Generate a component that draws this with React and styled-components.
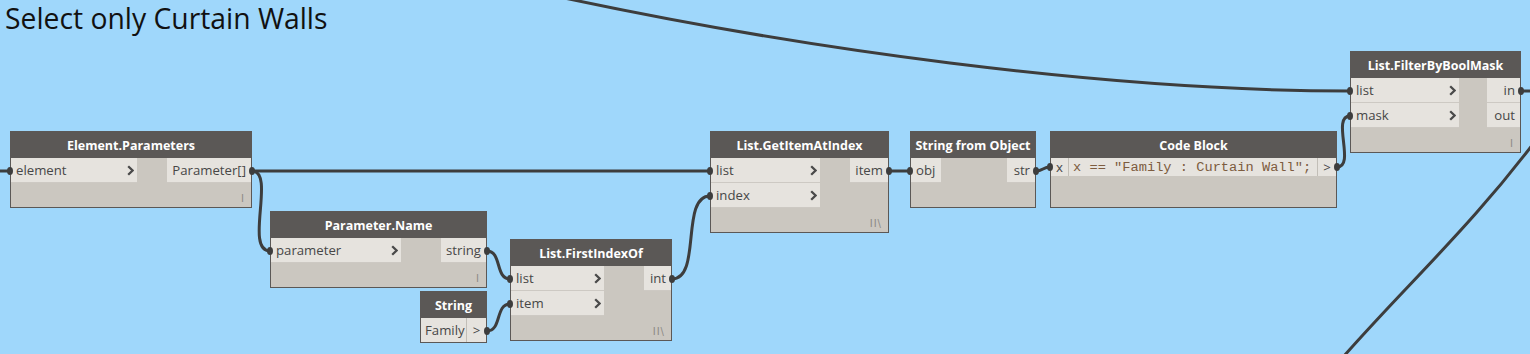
import React from 'react'
import styled, { createGlobalStyle } from 'styled-components'

const GlobalStyle = createGlobalStyle`
  html, body { margin: 0; padding: 0; background: #9fd7fb; overflow: hidden; }
  * { box-sizing: border-box; }
`

const nodes = [
  { title: 'Element.Parameters', x: 10, y: 131, w: 242, iw: 126, ow: 84, inputs: ['element'], outputs: ['Parameter[]'], lacing: 'I' },
  { title: 'Parameter.Name', x: 270, y: 211, w: 217, iw: 130, ow: 45, inputs: ['parameter'], outputs: ['string'], lacing: 'I' },
  { title: 'List.FirstIndexOf', x: 510, y: 239, w: 162, iw: 93, ow: 27, inputs: ['list', 'item'], outputs: ['int'], lacing: 'II\\' },
  { title: 'List.GetItemAtIndex', x: 710, y: 131, w: 179, iw: 109, ow: 38, inputs: ['list', 'index'], outputs: ['item'], lacing: 'II\\' },
  { title: 'String from Object', x: 910, y: 131, w: 126, iw: 30, ow: 28, inputs: ['obj'], outputs: ['str'], plain: true },
  { title: 'List.FilterByBoolMask', x: 1350, y: 51, w: 171, iw: 108, ow: 33, inputs: ['list', 'mask'], outputs: ['in', 'out'], lacing: 'I' },
]

const wires = [
  'M -10 171 L 10 171',
  'M 252 171 L 710 171',
  'M 252 171 C 276 171, 244 251, 270 251',
  'M 487 251 C 502 251, 495 279, 510 279',
  'M 487 331 C 502 331, 495 304, 510 304',
  'M 672 279 C 702 279, 680 196, 710 196',
  'M 889 171 L 910 171',
  'M 1036 171 C 1043 171, 1043 167, 1050 167',
  'M 1337 167 C 1356 167, 1331 116, 1350 116',
  'M 400 -40 C 800 60, 1150 91, 1350 91',
  'M 1521 91 L 1540 91',
  'M 1330 372 C 1400 290, 1470 230, 1545 128',
]

const ends = [
  [10, 171], [252, 171], [270, 251], [487, 251], [510, 279], [487, 331], [510, 304],
  [672, 279], [710, 171], [710, 196], [889, 171], [910, 171], [1036, 171], [1050, 167],
  [1337, 167], [1350, 116], [1350, 91], [1521, 91],
]

const Canvas = styled.div`
  position: relative;
  width: 1530px;
  height: 354px;
  overflow: hidden;
  background: #9fd7fb;
  font-family: "Open Sans", "Noto Sans", sans-serif;
`

const Title = styled.div`
  position: absolute;
  left: 5px;
  top: 0;
  font-size: 28.3px;
  line-height: 36px;
  color: #111;
`

const Wires = styled.svg`
  position: absolute;
  inset: 0;
  pointer-events: none;
  z-index: 2;
`

const Node = styled.div`
  position: absolute;
  left: ${p => p.$x}px;
  top: ${p => p.$y}px;
  width: ${p => p.$w}px;
  border: 1px solid #5b5856;
  background: #cbc7c0;
  display: flex;
  flex-direction: column;
`

const Header = styled.div`
  height: 26px;
  background: #5b5856;
  color: #fff;
  font-weight: 700;
  font-size: 12.5px;
  display: flex;
  align-items: center;
  justify-content: center;
  white-space: nowrap;
`

const Body = styled.div`
  display: flex;
  justify-content: space-between;
  align-items: flex-start;
`

const Column = styled.div`
  width: ${p => p.$w}px;
  display: flex;
  flex-direction: column;
`

const Port = styled.div`
  height: 25px;
  background: #e6e3de;
  border-bottom: 1px solid #cdc9c3;
  color: #474747;
  font-size: 13.2px;
  display: flex;
  align-items: center;
  justify-content: ${p => (p.$out ? 'flex-end' : 'space-between')};
  padding: ${p => (p.$out ? '0 5px 0 0' : '0 3px 0 5px')};
  white-space: nowrap;
`

const Footer = styled.div`
  height: 24px;
  display: flex;
  align-items: flex-end;
  justify-content: flex-end;
  padding: 0 6px 3px 0;
  color: #8d8a86;
  font-size: 10px;
  letter-spacing: 1px;
  font-family: "DejaVu Sans", sans-serif;
`

const InputRow = styled.div`
  height: 24px;
  display: flex;
  background: #e6e3de;
  font-size: 13.2px;
  color: #474747;
`

const Cell = styled.div`
  width: ${p => p.$w}px;
  flex: ${p => (p.$w ? 'none' : '1 1 0')};
  min-width: 0;
  overflow: hidden;
  display: flex;
  align-items: center;
  justify-content: ${p => (p.$center ? 'center' : 'flex-start')};
  padding: 0 ${p => (p.$center ? 0 : 4)}px;
  border-right: ${p => (p.$sep ? '1px solid #c2beb7' : 'none')};
  white-space: pre;
`

const Code = styled(Cell)`
  font-family: "Liberation Mono", "DejaVu Sans Mono", monospace;
  font-size: 13.7px;
  color: #7d5c3f;
`

const CodeRow = styled(InputRow)`
  height: 18px;
`

const Filler = styled.div`
  height: 31px;
`

const Chevron = () => (
  <svg width="7" height="11" viewBox="0 0 7 11">
    <path d="M1.2 1.2 L5.6 5.5 L1.2 9.8" fill="none" stroke="#4a4a4a" strokeWidth="2.3" />
  </svg>
)

const DynNode = ({ n }) => (
  <Node $x={n.x} $y={n.y} $w={n.w}>
    <Header>{n.title}</Header>
    <Body>
      <Column $w={n.iw}>
        {n.inputs.map(i => (
          <Port key={i}>
            {i}
            {!n.plain && <Chevron />}
          </Port>
        ))}
      </Column>
      <Column $w={n.ow}>
        {n.outputs.map(o => (
          <Port key={o} $out>{o}</Port>
        ))}
      </Column>
    </Body>
    <Footer>{n.lacing}</Footer>
  </Node>
)

const App = () => (
  <Canvas>
    <GlobalStyle />
    <Title>Select only Curtain Walls</Title>

    {nodes.map(n => <DynNode key={n.title} n={n} />)}

    <Node $x={420} $y={291} $w={67}>
      <Header>String</Header>
      <InputRow>
        <Cell $w={46} $sep>Family</Cell>
        <Cell $center>&gt;</Cell>
      </InputRow>
    </Node>

    <Node $x={1050} $y={131} $w={287}>
      <Header>Code Block</Header>
      <CodeRow>
        <Cell $w={18} $sep $center>x</Cell>
        <Code $sep>x == "Family : Curtain Wall";</Code>
        <Cell $w={18} $center>&gt;</Cell>
      </CodeRow>
      <Filler />
    </Node>

    <Wires width="1530" height="354" viewBox="0 0 1530 354">
      {wires.map(d => (
        <path key={d} d={d} fill="none" stroke="#3d3d3d" strokeWidth="3" />
      ))}
      {ends.map(([x, y]) => (
        <ellipse key={`${x}-${y}`} cx={x} cy={y} rx="3" ry="4" fill="#3d3d3d" />
      ))}
    </Wires>
  </Canvas>
)

export default App
